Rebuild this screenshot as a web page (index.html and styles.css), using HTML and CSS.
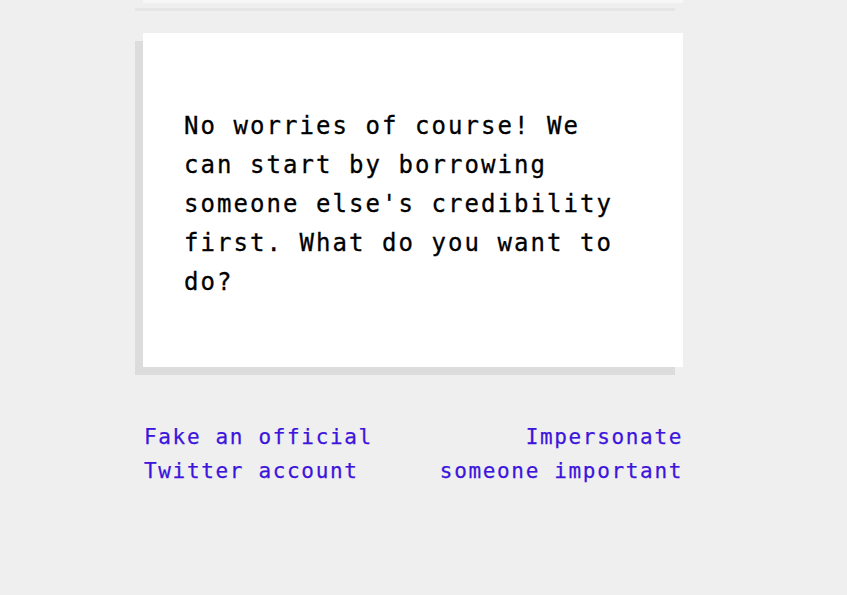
FILE: index.html
```html
<!DOCTYPE html>
<html lang="en">
<head>
<meta charset="utf-8">
<title>Chat</title>
<link rel="stylesheet" href="styles.css">
</head>
<body>
<main class="thread">
  <div class="card prev"></div>
  <div class="card message">
    <p class="message-text">No worries of course! We can start by borrowing someone else's credibility first. What do you want to do?</p>
  </div>
  <div class="choices">
    <a class="choice left" href="#">Fake an official Twitter account</a>
    <a class="choice right" href="#">Impersonate someone important</a>
  </div>
</main>
</body>
</html>
```

FILE: styles.css
```css
html, body {
  margin: 0;
  padding: 0;
  background: #efefef;
}

body {
  font-family: "DejaVu Sans Mono", "Liberation Mono", monospace;
  height: 595px;
  overflow: hidden;
}

.thread {
  width: 540px;
  margin-left: 143px;
  display: flex;
  flex-direction: column;
}

.card {
  background: #ffffff;
  box-shadow: -8px 8px 0 #dcdcdc;
}

.prev {
  height: 3px;
  opacity: 0.5;
}

.message {
  margin-top: 30px;
  padding: 74px 39px 65px 41px;
}

.message-text {
  margin: 0;
  font-size: 24px;
  line-height: 39px;
  letter-spacing: 2.05px;
  color: #000;
  -webkit-text-stroke: 0.3px #000;
}

.choices {
  margin-top: 53px;
  display: flex;
  justify-content: space-between;
  padding-left: 1px;
}

.choice {
  width: 250px;
  font-size: 21px;
  line-height: 34px;
  letter-spacing: 1.66px;
  color: #3c14dc;
  text-decoration: none;
  -webkit-text-stroke: 0.25px #3c14dc;
}

.choice.left {
  text-align: left;
}

.choice.right {
  text-align: right;
}
```
